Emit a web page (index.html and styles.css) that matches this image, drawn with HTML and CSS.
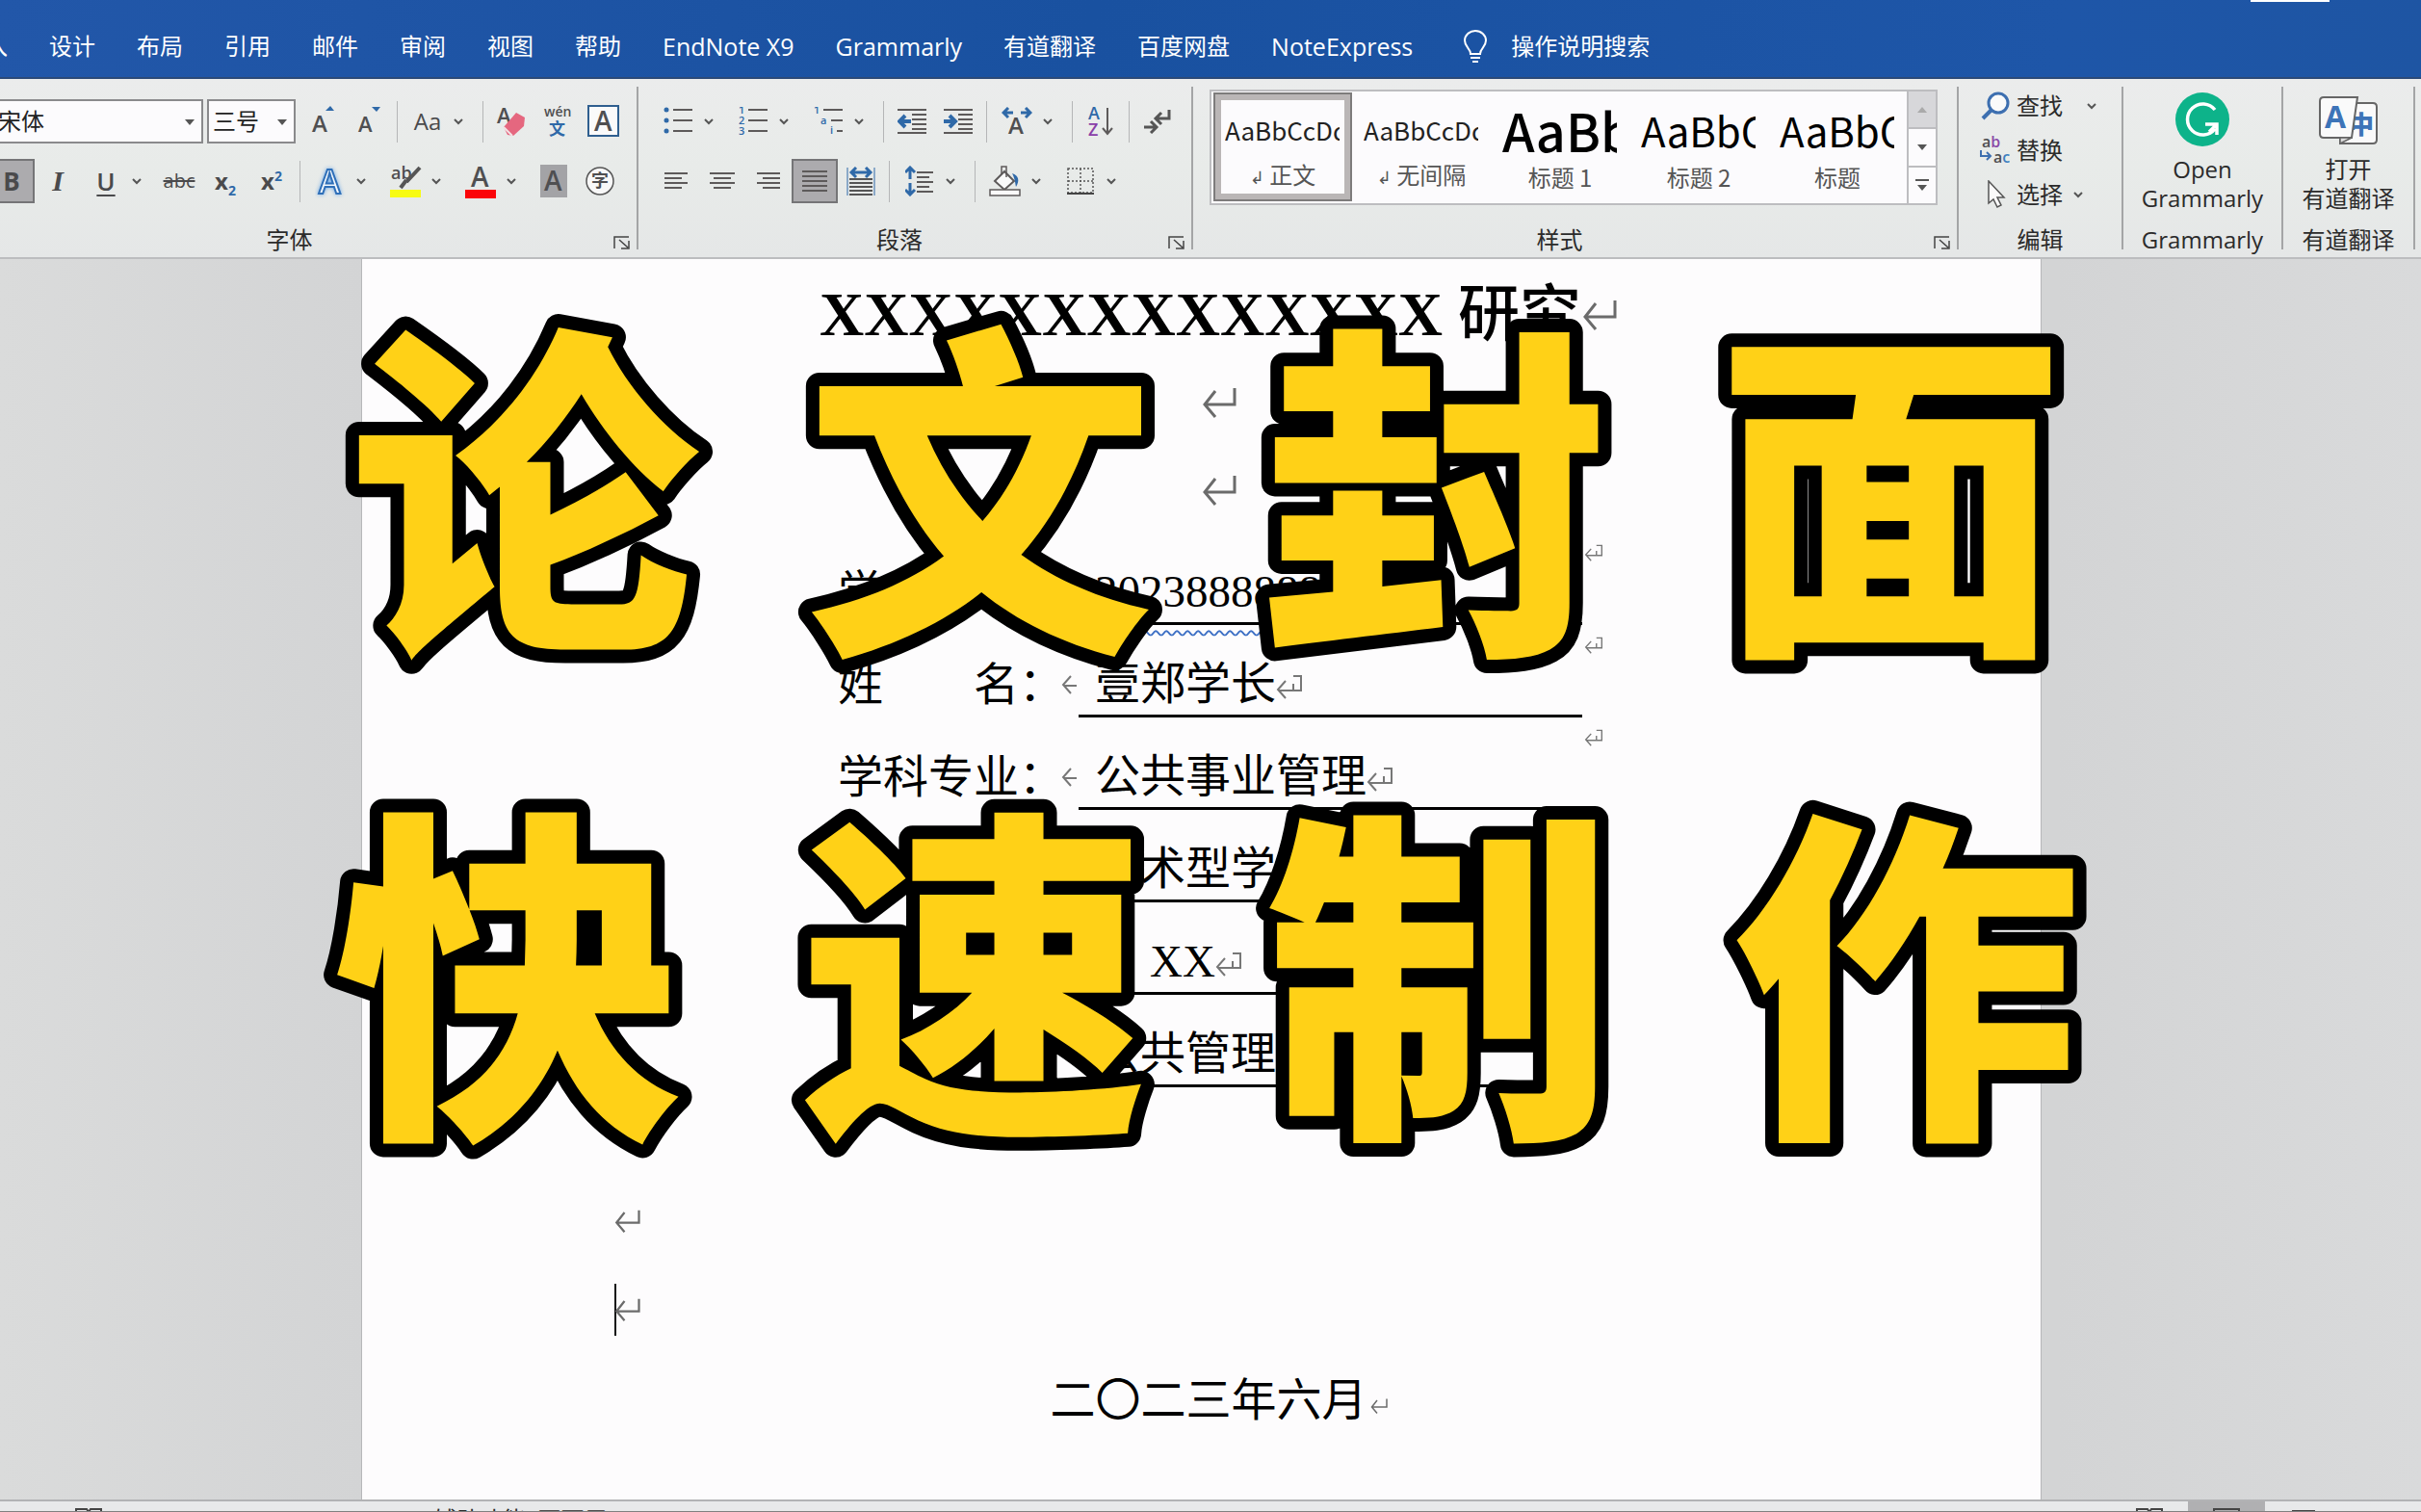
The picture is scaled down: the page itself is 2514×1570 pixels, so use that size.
FILE: index.html
```html
<!DOCTYPE html>
<html lang="zh-CN">
<head>
    <meta charset="UTF-8">
    <meta name="viewport" content="width=device-width, initial-scale=1.0">
    <title>论文封面快速制作</title>
    <link rel="stylesheet" href="styles.css">
</head>

<body>
    <!-- shared icons -->
    <svg class="defs" aria-hidden="true">
        <symbol id="chev" viewBox="0 0 12 8"><path d="M2 2l4 4 4-4" fill="none" stroke="#555" stroke-width="2"/></symbol>
        <symbol id="ret" viewBox="0 0 36 32"><path d="M34 1v17H3M14 4L3 18l11 13" fill="none" stroke="#6b6b6b" stroke-width="3"/></symbol>
        <symbol id="cell" viewBox="0 0 28 26"><path d="M18 2h8v15H3M10 7L2 16l8 9M18 10v6" fill="none" stroke="#777" stroke-width="2"/></symbol>
        <symbol id="launch" viewBox="0 0 18 14"><path d="M1 13V1h15M6 4l9 8M16 5v8H8" fill="none" stroke="#444" stroke-width="1.5"/></symbol>
    </svg>

    <div class="app">
        <header class="titlebar">
            <nav class="tabs">
                <a href="#">插入</a>
                <a href="#">设计</a>
                <a href="#">布局</a>
                <a href="#">引用</a>
                <a href="#">邮件</a>
                <a href="#">审阅</a>
                <a href="#">视图</a>
                <a href="#">帮助</a>
                <a href="#" class="en">EndNote X9</a>
                <a href="#" class="en">Grammarly</a>
                <a href="#">有道翻译</a>
                <a href="#">百度网盘</a>
                <a href="#" class="en">NoteExpress</a>
            </nav>
            <button class="tellme">
                <svg width="26" height="34" viewBox="0 0 26 34" fill="none" stroke="#fff" stroke-width="2"><path d="M8 25c0-6-6-7-6-14a11 10 0 0 1 22 0c0 7-6 8-6 14zM8 29h10M10 33h6"/></svg>
                操作说明搜索
            </button>
            <span class="window-edge"></span>
        </header>

        <div class="ribbon">
            <!-- font -->
            <section class="group font-group">
                <div class="row">
                    <div class="combo combo-font">
                        <select aria-label="字体"><option>宋体</option></select>
                    </div>
                    <div class="combo combo-size">
                        <select aria-label="字号"><option>三号</option></select>
                    </div>
                    <button class="tool" aria-label="增大字号"><svg width="30" height="34" viewBox="0 0 30 34"><text x="4" y="28" class="t24">A</text><path d="M18 6h9l-4-5z" fill="#2f69a8"/></svg></button>
                    <button class="tool" aria-label="减小字号"><svg width="30" height="34" viewBox="0 0 30 34"><text x="4" y="28" class="t22">A</text><path d="M18 2h9l-4 5z" fill="#2f69a8"/></svg></button>
                    <i class="sep"></i>
                    <button class="split"><span class="aa">Aa</span><svg class="chev"><use href="#chev"/></svg></button>
                    <i class="sep"></i>
                    <button class="tool" aria-label="清除格式"><svg width="32" height="34" viewBox="0 0 32 34"><text x="1" y="19" class="t22">A</text><path d="M8 23L21 8l9 5-1 9-11 10-6-1z" fill="#e5677f"/><path d="M8 23l9 9" stroke="#f3e2e5" stroke-width="2"/></svg></button>
                    <button class="tool" aria-label="拼音指南"><svg width="32" height="36" viewBox="0 0 32 36"><text x="2" y="13" class="t14">wén</text><text x="7" y="32" class="cn17">文</text></svg></button>
                    <button class="tool" aria-label="字符边框"><svg width="34" height="34" viewBox="0 0 34 34"><path d="M1 1h31v31H1z" fill="#fafafa" stroke="#2f5f8f" stroke-width="2"/><text x="7" y="27" class="t28">A</text></svg></button>
                </div>
                <div class="row">
                    <button class="tool on"><b>B</b></button>
                    <button class="tool"><em>I</em></button>
                    <button class="split"><u>U</u><svg class="chev"><use href="#chev"/></svg></button>
                    <button class="tool"><s>abc</s></button>
                    <button class="tool"><span class="x">x<sub>2</sub></span></button>
                    <button class="tool"><span class="x">x<sup>2</sup></span></button>
                    <i class="sep"></i>
                    <button class="split" aria-label="文本效果"><svg width="32" height="36" viewBox="0 0 32 36"><text x="4" y="31" class="glow">A</text></svg><svg class="chev"><use href="#chev"/></svg></button>
                    <button class="split" aria-label="突出显示"><svg width="34" height="36" viewBox="0 0 34 36"><text x="2" y="16" class="t18">ab</text><path d="M32 4L18 19M18 17l-6 8" stroke="#555" stroke-width="4"/><path d="M1 27h32v8H1z" fill="#f7fb12"/></svg><svg class="chev"><use href="#chev"/></svg></button>
                    <button class="split" aria-label="字体颜色"><svg width="34" height="36" viewBox="0 0 34 36"><text x="7" y="24" class="t28">A</text><path d="M1 27h32v9H1z" fill="#fb0509"/></svg><svg class="chev"><use href="#chev"/></svg></button>
                    <button class="tool" aria-label="字符底纹"><svg width="28" height="34" viewBox="0 0 28 34"><path d="M0 0h28v34H0z" fill="#a3a3a6"/><text x="4" y="27" class="t28">A</text></svg></button>
                    <button class="tool" aria-label="带圈字符"><svg width="30" height="30" viewBox="0 0 30 30"><circle cx="15" cy="15" r="14" fill="#f8f8f8" stroke="#555" stroke-width="1.5"/><text x="6" y="21" class="cn18">字</text></svg></button>
                </div>
                <footer>字体<svg class="launch"><use href="#launch"/></svg></footer>
            </section>

            <!-- paragraph -->
            <section class="group para-group">
                <div class="row">
                    <button class="split" aria-label="项目符号"><svg width="30" height="30" viewBox="0 0 30 30"><path d="M10 3h20M10 14h20M10 25h20" stroke="#5d5a5a" stroke-width="2"/><g fill="#2f69a8"><circle cx="3" cy="3" r="2.5"/><circle cx="3" cy="14" r="2.5"/><circle cx="3" cy="25" r="2.5"/></g></svg><svg class="chev"><use href="#chev"/></svg></button>
                    <button class="split" aria-label="编号"><svg width="30" height="30" viewBox="0 0 30 30"><path d="M10 3h20M10 14h20M10 25h20" stroke="#5d5a5a" stroke-width="2"/><text x="0" y="7" class="n10">1</text><text x="0" y="18" class="n10">2</text><text x="0" y="29" class="n10">3</text></svg><svg class="chev"><use href="#chev"/></svg></button>
                    <button class="split" aria-label="多级列表"><svg width="30" height="30" viewBox="0 0 30 30"><path d="M10 3h20M18 14h12M24 25h6" stroke="#5d5a5a" stroke-width="2"/><text x="0" y="7" class="n10">1</text><text x="7" y="18" class="n10">a</text><text x="17" y="28" class="n10">i</text></svg><svg class="chev"><use href="#chev"/></svg></button>
                    <i class="sep"></i>
                    <button class="tool" aria-label="减少缩进"><svg width="30" height="28" viewBox="0 0 30 28"><path d="M0 2h30M15 7h15M15 12h15M15 17h15M15 22h15M0 26h30" stroke="#5d5a5a" stroke-width="2"/><path d="M14 14H3M8 8l-6 6 6 6" stroke="#2f69a8" stroke-width="4" fill="none"/></svg></button>
                    <button class="tool" aria-label="增加缩进"><svg width="30" height="28" viewBox="0 0 30 28"><path d="M0 2h30M15 7h15M15 12h15M15 17h15M15 22h15M0 26h30" stroke="#5d5a5a" stroke-width="2"/><path d="M0 14h11M6 8l6 6-6 6" stroke="#2f69a8" stroke-width="4" fill="none"/></svg></button>
                    <i class="sep"></i>
                    <button class="split" aria-label="中文版式"><svg width="32" height="30" viewBox="0 0 32 30"><text x="7" y="28" class="t26">A</text><path d="M2 6h10M7 1L2 6l5 5M20 6h10M25 1l5 5-5 5" stroke="#2f69a8" stroke-width="3" fill="none"/></svg><svg class="chev"><use href="#chev"/></svg></button>
                    <i class="sep"></i>
                    <button class="tool" aria-label="排序"><svg width="28" height="32" viewBox="0 0 28 32"><text x="1" y="14" class="az-a">A</text><text x="1" y="31" class="az-z">Z</text><path d="M21 2v27M16 23l5 6 5-6" stroke="#5d5a5a" stroke-width="2" fill="none"/></svg></button>
                    <i class="sep"></i>
                    <button class="tool" aria-label="显示编辑标记"><svg width="28" height="26" viewBox="0 0 28 26"><path d="M26 1v9H13M18 4l-6 6 6 6M0 19h11M7 13l6 6-6 6" stroke="#555" stroke-width="3" fill="none"/></svg></button>
                </div>
                <div class="row">
                    <button class="tool" aria-label="左对齐"><svg width="24" height="18" viewBox="0 0 24 18"><path d="M0 1h24M0 6h18M0 11h24M0 16h18" stroke="#5d5a5a" stroke-width="2"/></svg></button>
                    <button class="tool" aria-label="居中"><svg width="26" height="18" viewBox="0 0 26 18"><path d="M0 1h26M4 6h18M0 11h26M4 16h18" stroke="#5d5a5a" stroke-width="2"/></svg></button>
                    <button class="tool" aria-label="右对齐"><svg width="24" height="18" viewBox="0 0 24 18"><path d="M0 1h24M6 6h18M0 11h24M6 16h18" stroke="#5d5a5a" stroke-width="2"/></svg></button>
                    <button class="tool on" aria-label="两端对齐"><svg width="26" height="22" viewBox="0 0 26 22"><path d="M0 1h26M0 6h26M0 11h26M0 16h26M0 21h26" stroke="#5d5a5a" stroke-width="2"/></svg></button>
                    <button class="tool" aria-label="分散对齐"><svg width="30" height="30" viewBox="0 0 30 30"><path d="M3 13h24M3 17h24M3 21h24M3 25h24M3 29h24" stroke="#555" stroke-width="2"/><path d="M1 1v29M29 1v29" stroke="#2f69a8"/><path d="M5 6h20M10 1L5 6l5 5M20 1l5 5-5 5" stroke="#2f69a8" stroke-width="3" fill="none"/></svg></button>
                    <i class="sep"></i>
                    <button class="split" aria-label="行距"><svg width="30" height="32" viewBox="0 0 30 32"><path d="M12 7h17M12 12h13M12 17h17M12 22h13M12 27h17" stroke="#5d5a5a" stroke-width="2"/><path d="M5 2v12M0 7l5-5 5 5M5 18v12M0 25l5 5 5-5" stroke="#2f69a8" stroke-width="3" fill="none"/></svg><svg class="chev"><use href="#chev"/></svg></button>
                    <i class="sep"></i>
                    <button class="split" aria-label="底纹"><svg width="34" height="32" viewBox="0 0 34 32"><path d="M6 16L16 6l10 10-10 9z" fill="#fafafa" stroke="#5d5a5a" stroke-width="2"/><path d="M13 9V1h5v11" fill="none" stroke="#5d5a5a" stroke-width="1.5"/><path d="M24 8c7 2 8 8 4 14-1-5-1-8-4-14z" fill="#2f69a8"/><path d="M1 25h31v6H1z" fill="#fafafa" stroke="#5d5a5a" stroke-width="1.5"/></svg><svg class="chev"><use href="#chev"/></svg></button>
                    <button class="split" aria-label="边框"><svg width="28" height="28" viewBox="0 0 28 28"><path d="M1 1h26v25H1zM14 1v25M1 14h26" fill="none" stroke="#555" stroke-dasharray="2 2" stroke-width="1.5"/><path d="M0 27h28" stroke="#444" stroke-width="2"/></svg><svg class="chev"><use href="#chev"/></svg></button>
                </div>
                <footer>段落<svg class="launch"><use href="#launch"/></svg></footer>
            </section>

            <!-- styles -->
            <section class="group style-group">
                <div class="gallery">
                    <button class="style selected"><span class="sample">AaBbCcDd</span><span class="name"><small>↲</small> 正文</span></button>
                    <button class="style"><span class="sample">AaBbCcDd</span><span class="name"><small>↲</small> 无间隔</span></button>
                    <button class="style"><span class="sample h1">AaBb</span><span class="name">标题 1</span></button>
                    <button class="style"><span class="sample h2">AaBbC</span><span class="name">标题 2</span></button>
                    <button class="style"><span class="sample h2">AaBbC</span><span class="name">标题</span></button>
                    <div class="scroller">
                        <button class="off" aria-label="上一行"><svg width="10" height="6"><path d="M0 6h10L5 0z" fill="#aaa"/></svg></button>
                        <button aria-label="下一行"><svg width="10" height="6"><path d="M0 0h10L5 6z" fill="#555"/></svg></button>
                        <button aria-label="其他"><svg width="14" height="14"><path d="M0 1h14v2H0zM2 7h10l-5 6z" fill="#555"/></svg></button>
                    </div>
                </div>
                <footer>样式<svg class="launch"><use href="#launch"/></svg></footer>
            </section>

            <!-- editing -->
            <section class="group edit-group">
                <div class="edit-list">
                    <button><svg width="32" height="30" viewBox="0 0 32 30"><circle cx="19" cy="12" r="10" fill="#fafafa" stroke="#3d6fb0" stroke-width="3"/><path d="M12 19L3 28" stroke="#3d6fb0" stroke-width="4"/></svg>查找<svg class="chev far"><use href="#chev"/></svg></button>
                    <button><svg width="32" height="30" viewBox="0 0 32 30"><text x="2" y="12" class="t16">a<tspan fill="#8a4aa8">b</tspan></text><text x="14" y="28" class="t16">a<tspan fill="#3d7fc0">c</tspan></text><path d="M1 15v6h10M7 17l4 4-4 4" fill="none" stroke="#3d6fb0" stroke-width="2"/></svg>替换</button>
                    <button><svg width="32" height="30" viewBox="0 0 32 30"><path d="M9 1v23l5-4 4 8 4-2-4-8h7z" fill="#fafafa" stroke="#555" stroke-width="1.5"/></svg>选择<svg class="chev"><use href="#chev"/></svg></button>
                </div>
                <footer>编辑</footer>
            </section>

            <section class="group gram-group">
                <button class="big">
                    <svg width="58" height="58" viewBox="0 0 58 58"><circle cx="29" cy="29" r="28" fill="#0db38a"/><path d="M42 19a16 16 0 1 0 0 20M32 34h12v11M44 34l-8 8" fill="none" stroke="#fff" stroke-width="3.5"/></svg>
                    <span>Open<br>Grammarly</span>
                </button>
                <footer>Grammarly</footer>
            </section>

            <section class="group youdao-group">
                <button class="big">
                    <svg width="62" height="58" viewBox="0 0 62 58"><path d="M22 54V12h34q4 0 4 4v34q0 4-4 4z" fill="#fafafa" stroke="#666" stroke-width="2"/><text x="31" y="44" class="zh">中</text><path d="M5 6h35l-6 42H5q-4 0-4-4V10q0-4 4-4z" fill="#fafafa" stroke="#666" stroke-width="2"/><path d="M22 54l12-6H22z" fill="#ddd" stroke="#666" stroke-width="1.5"/><text x="6" y="38" class="za">A</text></svg>
                    <span>打开<br>有道翻译</span>
                </button>
                <footer>有道翻译</footer>
            </section>
        </div>

        <main class="canvas">
            <article class="page">
                <h1>XXXXXXXXXXXXXX <span>研究</span><svg class="ret"><use href="#ret"/></svg></h1>
                <p class="line center"><svg class="ret"><use href="#ret"/></svg></p>
                <p class="line center"><svg class="ret"><use href="#ret"/></svg></p>
                <table>
                    <tr><th><span class="lab"><span>学</span><span>号：</span></span></th><td><span class="wavy">2023888888</span></td><td class="end"><svg><use href="#cell"/></svg></td></tr>
                    <tr><th><span class="lab"><span>姓</span><span>名：</span></span><svg class="tab"><use href="#cell"/></svg></th><td>壹郑学长<svg class="cell"><use href="#cell"/></svg></td><td class="end"><svg><use href="#cell"/></svg></td></tr>
                    <tr><th><span class="lab"><span>学科专业：</span></span><svg class="tab"><use href="#cell"/></svg></th><td>公共事业管理<svg class="cell"><use href="#cell"/></svg></td><td class="end"><svg><use href="#cell"/></svg></td></tr>
                    <tr><th></th><td>学术型学</td><td></td></tr>
                    <tr><th></th><td class="indent">XX<svg class="cell"><use href="#cell"/></svg></td><td></td></tr>
                    <tr><th></th><td>公共管理</td><td></td></tr>
                </table>
                <p class="line after-table"><svg class="ret small"><use href="#ret"/></svg></p>
                <p class="line caret"><svg class="ret small"><use href="#ret"/></svg></p>
                <p class="line center date">二〇二三年六月<svg class="ret tiny"><use href="#ret"/></svg></p>
            </article>

            <!-- caption over the page -->
            <div class="caption">
                <div class="words">
                    <svg viewBox="0 0 473 502"><text x="236" y="382">论</text></svg>
                    <svg viewBox="0 0 473 502"><text x="236" y="382">文</text></svg>
                    <svg viewBox="0 0 473 502"><text x="236" y="382">封</text></svg>
                    <svg viewBox="0 0 473 502"><text x="236" y="382">面</text></svg>
                </div>
                <div class="words wide">
                    <svg viewBox="0 0 473 502"><text x="236" y="382">快</text></svg>
                    <svg viewBox="0 0 473 502"><text x="236" y="382">速</text></svg>
                    <svg viewBox="0 0 473 502"><text x="236" y="382">制</text></svg>
                    <svg viewBox="0 0 473 502"><text x="236" y="382">作</text></svg>
                </div>
            </div>
        </main>

        <footer class="status">
            <svg width="28" height="22" viewBox="0 0 28 22" fill="none" stroke="#444" stroke-width="2"><path d="M1 1h11l2 3 2-3h11v19H1zM14 4v16"/></svg>
            <span class="access">辅助功能: 不可用</span>
            <button><svg width="28" height="22" viewBox="0 0 28 22" fill="none" stroke="#444" stroke-width="2"><path d="M1 1h11l2 3 2-3h11v19H1zM14 4v16"/></svg></button>
            <button class="on"><svg width="28" height="22" viewBox="0 0 28 22" fill="none" stroke="#444" stroke-width="2"><path d="M1 1h26v20H1z"/></svg></button>
            <button><svg width="24" height="22"><path d="M0 2h24v4H0z" fill="#444"/></svg></button>
        </footer>
    </div>
</body>
</html>
```
FILE: styles.css
```css
* {
    box-sizing: border-box;
}
body {
    margin: 0;
    font-family: "Open Sans", "Noto Sans CJK SC", sans-serif;
    font-size: 24px;
    line-height: 30px;
    color: #2b2b2b;
}
button {
    border: 0;
    padding: 0;
    background: none;
    font: inherit;
    color: inherit;
}
svg {
    display: block;
    flex: none;
}
.defs {
    display: none;
}
.app {
    display: flex;
    flex-direction: column;
    height: 100vh;
    overflow: hidden;
    border-bottom: 1px solid #808080;
}

/* title bar */
.titlebar {
    position: relative;
    flex: none;
    display: flex;
    align-items: center;
    height: 82px;
    padding-top: 16px;
    background: linear-gradient(100deg, #2257a9, #1951a0 45%, #1e56a8 85%, #1e55a3);
    border-bottom: 2px solid #2c4a78;
    color: #fff;
    white-space: nowrap;
}
.tabs {
    display: flex;
    gap: 43px;
    margin-left: -40px;
}
.tabs a {
    color: #fff;
    text-decoration: none;
}
.tabs .en {
    font-size: 25px;
}
.tellme {
    display: flex;
    align-items: center;
    gap: 24px;
    margin-left: 52px;
}
.window-edge {
    position: absolute;
    top: 0;
    right: 95px;
    width: 82px;
    height: 2px;
    background: #fff;
}

/* ribbon */
.ribbon {
    flex: none;
    display: flex;
    height: 187px;
    padding: 8px 0;
    background: linear-gradient(#ebecec, #e8ebe9 50%, #e5e7e7);
    border-bottom: 2px solid #bcbdbf;
    white-space: nowrap;
}
.group {
    flex: none;
    display: flex;
    flex-direction: column;
    gap: 16px;
    padding-top: 13px;
    border-right: 2px solid #a4a5a6;
}
.group > footer {
    position: relative;
    margin-top: auto;
    text-align: center;
    line-height: 20px;
}
.font-group > footer,
.para-group > footer,
.style-group > footer {
    padding-right: 32px;
}
.font-group {
    width: 691px;
    margin-left: -28px;
}
.font-group .row {
    padding-left: 16px;
}
.para-group {
    width: 576px;
}
.para-group .row {
    padding-left: 15px;
}
.style-group {
    width: 795px;
    padding-top: 3px;
}
.edit-group {
    width: 171px;
    padding-top: 0;
    gap: 0;
}
.gram-group {
    width: 166px;
    padding-top: 5px;
}
.youdao-group {
    width: 137px;
    padding-top: 5px;
}
.row {
    display: flex;
    align-items: center;
    height: 46px;
}
.launch {
    position: absolute;
    right: 6px;
    bottom: 0;
    width: 18px;
    height: 14px;
}
.combo {
    position: relative;
    height: 46px;
    margin-right: 4px;
}
.combo select {
    appearance: none;
    width: 100%;
    height: 100%;
    padding: 0 8px;
    border: 2px solid #8a8a8c;
    border-radius: 0;
    background: #fcfbfd;
    font: inherit;
    color: #222;
}
.combo::after {
    content: "";
    position: absolute;
    right: 9px;
    top: 21px;
    border: 5px solid transparent;
    border-top: 6px solid #555;
    border-bottom: 0;
}
.combo-font {
    width: 223px;
}
.combo-size {
    width: 92px;
}
.combo-size select {
    padding: 0 4px;
}
.sep {
    width: 1px;
    height: 43px;
    margin: 0 5px;
    background: #b5b6b7;
}
.tool {
    display: flex;
    align-items: center;
    justify-content: center;
    width: 48px;
    height: 46px;
    color: #4a4a4c;
}
.tool.on {
    background: #acabae;
    border: 2px solid #757577;
}
.split {
    display: flex;
    align-items: center;
    width: 78px;
    height: 46px;
    color: #4a4a4c;
}
.split > :first-child {
    flex: 0 0 auto;
    margin: 0 auto;
}
.split .chev {
    margin: 0 14px 0 0;
}
.chev {
    width: 12px;
    height: 8px;
}
.aa {
    font-size: 24px;
}
.tool em {
    font-family: "Liberation Serif", serif;
    font-weight: bold;
    font-size: 30px;
}
.tool b {
    font-size: 26px;
}
.split u {
    font-weight: 600;
    font-size: 26px;
    text-underline-offset: 4px;
}
.tool s {
    font-size: 20px;
}
.x {
    font-weight: bold;
    font-size: 24px;
}
.x sub,
.x sup {
    font-size: 14px;
    line-height: 0;
    color: #2f69a8;
}

/* lettering inside icons */
svg text {
    fill: #4f4f51;
    font-weight: 600;
}
.t14 {
    font-size: 14px;
}
.t16 {
    font-size: 16px;
}
.t18 {
    font-size: 18px;
}
.t22 {
    font-size: 22px;
}
.t24 {
    font-size: 24px;
}
.t26 {
    font-size: 24px;
}
.t28 {
    font-size: 28px;
}
svg .n10 {
    font-size: 11px;
    fill: #2f69a8;
}
svg .cn17 {
    font-size: 17px;
    fill: #2f69a8;
}
.cn18 {
    font-size: 18px;
}
svg .az-a {
    font-size: 18px;
    fill: #2f69a8;
}
svg .az-z {
    font-size: 18px;
    fill: #8a3fa8;
}
svg .glow {
    font-size: 34px;
    fill: #f2f7fc;
    stroke: #2f6fb8;
    stroke-width: 2px;
    filter: drop-shadow(0 0 2px #6aa6e6);
}
svg .zh {
    font-size: 26px;
    font-weight: 900;
    fill: #3d74b8;
}
svg .za {
    font-size: 32px;
    font-weight: bold;
    fill: #3d74b8;
}

/* style gallery */
.gallery {
    display: flex;
    width: 756px;
    height: 120px;
    margin-left: 17px;
    padding: 1px 0 0 2px;
    background: #fcfbfd;
    border: 2px solid #bdbdc0;
}
.style {
    display: flex;
    flex-direction: column;
    width: 144px;
    height: 113px;
    padding: 6px 10px;
    border: 2px solid transparent;
}
.style.selected {
    border-color: #7d7b7b;
    box-shadow: inset 0 0 0 6px #bab6b6;
}
.sample {
    width: 119px;
    height: 64px;
    overflow: hidden;
    text-align: left;
    font-family: "Noto Sans CJK SC", sans-serif;
    font-size: 26px;
    font-weight: 400;
    line-height: 62px;
    color: #222;
}
.sample.h1 {
    font-size: 54px;
    font-weight: 500;
    color: #000;
}
.sample.h2 {
    font-size: 42px;
    color: #000;
}
.name {
    align-self: center;
    font-family: "Noto Sans CJK SC", sans-serif;
    line-height: 32px;
    color: #555;
}
.name small {
    font-family: "DejaVu Sans", sans-serif;
    font-size: 18px;
}
.scroller {
    display: flex;
    flex-direction: column;
    width: 30px;
    margin: -1px 0 0 auto;
    border-left: 2px solid #bdbdc0;
}
.scroller button {
    flex: 1;
    display: flex;
    align-items: center;
    justify-content: center;
    border-bottom: 2px solid #bdbdc0;
}
.scroller button:last-child {
    border-bottom: 0;
}
.scroller .off {
    background: #d7d7da;
}

.edit-list button {
    display: flex;
    align-items: center;
    gap: 6px;
    height: 46px;
    padding: 0 0 6px 22px;
}
.edit-list .chev {
    margin-left: 4px;
}
.edit-list .chev.far {
    margin-left: 18px;
}
.big {
    display: flex;
    flex-direction: column;
    align-items: center;
    gap: 8px;
}

/* document */
.canvas {
    position: relative;
    flex: 1;
    display: flex;
    min-height: 0;
    padding: 0 394px 0 375px;
    overflow: hidden;
    background: linear-gradient(90deg, #dadbdb, #d3d4d5 15%, #d3d4d5 85%, #d9dadb);
}
.page {
    flex: 1;
    padding: 12px 226px 0 262px;
    background: #fdfcfd;
    border: 1px solid #b6b7b9;
    border-width: 0 1px;
    color: #000;
}
.page h1,
.line {
    display: flex;
    align-items: center;
    height: 91px;
    margin: 0;
}
.page h1 {
    justify-content: center;
    font-family: "Liberation Serif", "Noto Sans CJK SC", serif;
    font-size: 64px;
    line-height: 91px;
    white-space: pre;
}
.page h1 span {
    font-weight: 500;
}
.center {
    justify-content: center;
}
.ret {
    width: 38px;
    height: 32px;
}
.ret.small {
    width: 27px;
    height: 24px;
}
.ret.tiny {
    width: 18px;
    height: 16px;
    margin: 12px 0 0 3px;
}
table {
    margin: -3px 0 0 232px;
    border-collapse: collapse;
    table-layout: fixed;
    font-family: "Liberation Serif", "Noto Sans CJK SC", serif;
    font-size: 47px;
    line-height: 56px;
    white-space: nowrap;
}
tr {
    height: 96px;
}
th,
td {
    padding: 0;
    vertical-align: bottom;
    text-align: left;
    font-weight: 400;
}
th {
    position: relative;
    width: 250px;
    padding-bottom: 4px;
}
.lab {
    display: flex;
    justify-content: space-between;
    width: 235px;
}
td:nth-child(2) {
    width: 523px;
    padding: 0 0 4px 17px;
    border-bottom: 3px solid #000;
}
td.indent {
    padding-left: 74px;
}
.tab {
    position: absolute;
    right: -10px;
    bottom: 22px;
    width: 28px;
    height: 26px;
    clip-path: inset(0 12px 0 0);
}
.cell {
    display: inline-block;
    width: 28px;
    height: 26px;
}
.end {
    width: 20px;
    vertical-align: top;
}
.end svg {
    width: 20px;
    height: 18px;
    margin: 14px 0 0 2px;
}
.wavy {
    text-decoration: underline wavy #3c6fc4 2px;
    text-underline-offset: 24px;
}
.after-table {
    margin-top: 93px;
}
.after-table,
.caret,
.date {
    height: 92px;
}
.caret::before {
    content: "";
    width: 2px;
    height: 54px;
    margin-right: -2px;
    background: #111;
}
.date {
    padding-top: 4px;
    font-family: "Liberation Serif", "Noto Sans CJK SC", serif;
    font-size: 47px;
}

/* caption */
.caption {
    position: absolute;
    top: 0;
    left: 0;
    right: 0;
}
.words {
    display: grid;
    grid-template-columns: repeat(4, 1fr);
    padding: 0 314px 0 308px;
}
.words.wide {
    padding: 0 292px 0 286px;
}
.words svg {
    width: 100%;
    height: 502px;
    overflow: visible;
}
.words text {
    font-family: "Noto Sans CJK SC", sans-serif;
    font-size: 362px;
    font-weight: 900;
    text-anchor: middle;
    fill: #ffd117;
    stroke: #000;
    stroke-width: 28px;
    stroke-linejoin: round;
    paint-order: stroke fill;
}

/* status bar */
.status {
    flex: none;
    display: flex;
    align-items: flex-start;
    height: 12px;
    padding: 0 82px 0 78px;
    border-top: 2px solid #b2b3b5;
    background: #e8e9ea;
    overflow: hidden;
}
.status > svg {
    margin-top: 7px;
}
.status button {
    display: flex;
    justify-content: center;
    width: 80px;
    height: 40px;
    padding-top: 7px;
}
.status button.on {
    background: #b0b0b2;
}
.access {
    margin: 4px auto 0 344px;
}
```
